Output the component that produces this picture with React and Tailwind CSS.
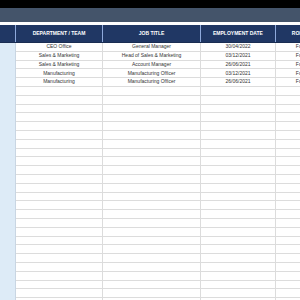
import React from 'react';

const rows = [
    { dept: 'CEO Office', title: 'General Manager', date: '30/04/2022', type: 'Full Time' },
    { dept: 'Sales & Marketing', title: 'Head of Sales & Marketing', date: '03/12/2021', type: 'Full Time' },
    { dept: 'Sales & Marketing', title: 'Account Manager', date: '26/06/2021', type: 'Full Time' },
    { dept: 'Manufacturing', title: 'Manufacturing Officer', date: '03/12/2021', type: 'Full Time' },
    { dept: 'Manufacturing', title: 'Manufacturing Officer', date: '26/06/2021', type: 'Full Time' },
];

// pad out the sheet with empty rows
const allRows = [...rows, ...Array.from({ length: 25 }, () => null)];

export default function App() {
    return (
        <div className="w-[300px] h-[300px] overflow-hidden bg-white" style={{ fontFamily: '"Liberation Sans", Arial, sans-serif' }}>
            <div className="h-[8px] bg-black" />
            <div className="h-[14px] bg-[#44546a]" />
            <div className="h-[3px] bg-white" />

            {/* Header */}
            <div className="flex h-[18px] bg-[#203764] text-white font-bold text-[5px] uppercase border-b border-[#1a2d52]">
                <div className="w-[16px] shrink-0 border-r border-[#8ea9db]" />
                <div className="w-[87px] shrink-0 flex items-center justify-center border-r border-[#8ea9db]">Department / Team</div>
                <div className="w-[98px] shrink-0 flex items-center justify-center border-r border-[#8ea9db]">Job Title</div>
                <div className="w-[75px] shrink-0 flex items-center justify-center border-r border-[#8ea9db]">Employment Date</div>
                <div className="w-[60px] shrink-0 flex items-center justify-center whitespace-nowrap">Role Type</div>
            </div>

            {/* Rows */}
            {allRows.map((r, i) => (
                <div key={i} className="flex h-[8.8px] text-[5px] text-[#333] leading-none">
                    <div className="w-[16px] shrink-0 bg-[#ddebf7] border-r border-[#c9d6e3]" />
                    <div className="w-[87px] shrink-0 flex items-end pb-[1.5px] justify-center border-r border-b border-[#dcdcdc]">{r?.dept}</div>
                    <div className="w-[98px] shrink-0 flex items-end pb-[1.5px] justify-center border-r border-b border-[#dcdcdc]">{r?.title}</div>
                    <div className="w-[75px] shrink-0 flex items-end pb-[1.5px] justify-center border-r border-b border-[#dcdcdc]">{r?.date}</div>
                    <div className="w-[60px] shrink-0 flex items-end pb-[1.5px] justify-center whitespace-nowrap border-b border-[#dcdcdc]">{r?.type}</div>
                </div>
            ))}
        </div>
    );
}
